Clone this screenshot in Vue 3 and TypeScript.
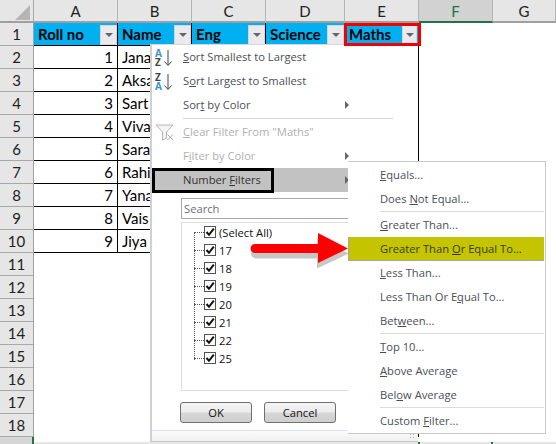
<script setup lang="ts">
const cols = ['A', 'B', 'C', 'D', 'E', 'F', 'G']
const headers = ['Roll no', 'Name', 'Eng', 'Science', 'Maths']
const names = ['Jana', 'Aksa', 'Sart', 'Viva', 'Sara', 'Rahi', 'Yana', 'Vais', 'Jiya']
const rowNums = Array.from({ length: 18 }, (_, i) => i + 1)
const values = ['(Select All)', '17', '18', '19', '20', '21', '22', '25']
</script>

<template>
  <div class="sheet">
    <div class="grid">
      <div class="corner"><span class="corner-tri"></span></div>
      <div v-for="c in cols" :key="c" class="col-head" :class="{ sel: c === 'F' }">{{ c }}</div>

      <template v-for="r in rowNums" :key="r">
        <div class="row-head">{{ r }}</div>
        <template v-if="r === 1">
          <div v-for="h in headers" :key="h" class="th" :class="{ maths: h === 'Maths' }">
            <span>{{ h }}</span>
            <i class="fbtn"><b></b></i>
          </div>
        </template>
        <template v-else-if="r <= 10">
          <div class="td num">{{ r - 1 }}</div>
          <div class="td">{{ names[r - 2] }}</div>
          <div class="td"></div>
          <div class="td"></div>
          <div class="td"></div>
        </template>
        <template v-else>
          <div class="blank"></div>
          <div class="blank"></div>
          <div class="blank"></div>
          <div class="blank"></div>
          <div class="blank edge"></div>
        </template>
        <div class="blank"></div>
        <div class="blank"></div>
      </template>

      <div class="row-head last"></div>
      <div class="foot"></div>
      <div class="foot"></div>
      <div class="foot"></div>
      <div class="foot"></div>
      <div class="foot"></div>
      <div class="foot tick"></div>
      <div class="foot"></div>
    </div>

    <div class="menu">
      <div class="item">
        <svg class="ico" width="18" height="24" viewBox="0 0 18 24">
          <text x="0" y="12" class="az blue">A</text>
          <text x="0" y="21" class="az dark">Z</text>
          <path d="M13 5V20M9.5 16.5L13 20.5L16.5 16.5" fill="none" stroke="#444" stroke-width="1" />
        </svg>
        <span><u>S</u>ort Smallest to Largest</span>
      </div>
      <div class="item">
        <svg class="ico" width="18" height="24" viewBox="0 0 18 24">
          <text x="0" y="12" class="az dark">Z</text>
          <text x="0" y="21" class="az blue">A</text>
          <path d="M13 5V20M9.5 16.5L13 20.5L16.5 16.5" fill="none" stroke="#444" stroke-width="1" />
        </svg>
        <span>S<u>o</u>rt Largest to Smallest</span>
      </div>
      <div class="item sub"><span>Sor<u>t</u> by Color</span><i class="tri"></i></div>
      <div class="sep"></div>
      <div class="item off">
        <svg class="ico" width="20" height="24" viewBox="0 0 20 24">
          <path d="M1 5H18L11.5 12V18L7.5 20V12Z" fill="#f4f4f4" stroke="#b5b5b5" />
          <path d="M12.5 14.5L18 20M18 14.5L12.5 20" stroke="#a8a8a8" fill="none" />
        </svg>
        <span><u>C</u>lear Filter From "Maths"</span>
      </div>
      <div class="item off sub"><span>F<u>i</u>lter by Color</span><i class="tri"></i></div>
      <div class="item numf">
        <span class="numf-box">Number <u>F</u>ilters</span>
        <i class="tri"></i>
      </div>

      <div class="search">Search</div>
      <div class="list">
        <div class="tree">
          <div v-for="v in values" :key="v" class="val">
            <span class="dots"></span>
            <span class="box">
              <svg width="10" height="10" viewBox="0 0 10 10">
                <path d="M1.5 5L4 7.8L8.8 1.6" fill="none" stroke="#111" stroke-width="2" />
              </svg>
            </span>
            <span class="vlabel">{{ v }}</span>
          </div>
        </div>
      </div>
      <div class="btns">
        <button class="btn">OK</button>
        <button class="btn">Cancel</button>
      </div>
      <div class="strip"><span class="grip"></span></div>
    </div>

    <div class="submenu">
      <div class="sitem"><span><u>E</u>quals...</span></div>
      <div class="sitem"><span>Does <u>N</u>ot Equal...</span></div>
      <div class="ssep"></div>
      <div class="sitem"><span><u>G</u>reater Than...</span></div>
      <div class="sitem hot"><span>Greater Than <u>O</u>r Equal To...</span></div>
      <div class="sitem"><span><u>L</u>ess Than...</span></div>
      <div class="sitem"><span>Less Than Or E<u>q</u>ual To...</span></div>
      <div class="sitem"><span>Bet<u>w</u>een...</span></div>
      <div class="ssep"></div>
      <div class="sitem"><span><u>T</u>op 10...</span></div>
      <div class="sitem"><span><u>A</u>bove Average</span></div>
      <div class="sitem"><span>Bel<u>o</u>w Average</span></div>
      <div class="ssep"></div>
      <div class="sitem"><span>Custom <u>F</u>ilter...</span></div>
    </div>

    <svg class="arrow" width="104" height="38" viewBox="0 0 104 38">
      <path d="M7 13H68V3L100 18L68 33V23H7A5 5 0 0 1 7 13Z" fill="#000" opacity=".22" transform="translate(1 2.5)" />
      <path d="M7 11H70V0L100 15.5L70 30V20H7A4.5 4.5 0 0 1 7 11Z" fill="#ff0000" />
    </svg>
  </div>
</template>

<style scoped>
.sheet {
  position: relative;
  width: 556px;
  height: 444px;
  overflow: hidden;
  background: #fff;
  font-family: Lato, "Open Sans", sans-serif;
}
.grid {
  display: grid;
  grid-template-columns: 34px 84px 74px 74px 79px 74px 74px 63px;
  grid-template-rows: repeat(19, 23px) 7px;
}
.corner {
  background: #e6e6e6;
  border-right: 1px solid #a8a8a8;
  border-bottom: 2px solid #a0a0a0;
  position: relative;
}
.corner-tri {
  position: absolute;
  left: 15px;
  top: 5px;
  width: 0;
  height: 0;
  border-style: solid;
  border-width: 0 0 15px 15px;
  border-color: transparent transparent #b5b5b5 transparent;
}
.col-head {
  background: #e6e6e6;
  border-right: 1px solid #b4b4b4;
  border-bottom: 2px solid #a0a0a0;
  display: flex;
  align-items: center;
  justify-content: center;
  font-size: 15px;
  color: #222;
  padding-top: 1px;
  box-sizing: border-box;
}
.col-head.sel {
  background: #d2d2d2;
  border-bottom-color: #217346;
  color: #217346;
}
.row-head {
  background: #e6e6e6;
  border-right: 1px solid #a0a0a0;
  border-bottom: 1px solid #a8a8a8;
  display: flex;
  align-items: center;
  justify-content: center;
  font-size: 15px;
  color: #222;
  box-sizing: border-box;
}
.row-head.last {
  background: #d6d6d6;
  border-bottom: 0;
  border-right: 2px solid #217346;
}
.th {
  background: #00b0f0;
  border-right: 1px solid #000;
  border-bottom: 1px solid #000;
  display: flex;
  align-items: center;
  padding-left: 4px;
  box-sizing: border-box;
  font-size: 15px;
  font-weight: 700;
  color: #000;
  position: relative;
}
.th.maths::after {
  content: "";
  position: absolute;
  left: -1px;
  top: 0;
  right: -3px;
  bottom: -1px;
  border: 3px solid #f00000;
  z-index: 1;
}
.fbtn {
  position: absolute;
  right: 0;
  top: 2px;
  width: 17px;
  height: 20px;
  background: #e9e9ee;
  border: 1px solid #d5d5da;
  box-sizing: border-box;
  display: flex;
  align-items: center;
  justify-content: center;
}
.maths .fbtn {
  width: 15px;
  right: 1px;
}
.fbtn b {
  width: 0;
  height: 0;
  border-style: solid;
  border-width: 4px 4px 0 4px;
  border-color: #666 transparent transparent transparent;
}
.td {
  border-right: 1px solid #000;
  border-bottom: 1px solid #000;
  display: flex;
  align-items: center;
  padding: 0 4px;
  box-sizing: border-box;
  font-size: 15px;
  color: #000;
}
.td.num {
  justify-content: flex-end;
}
.blank {
  background: #fff;
}
.foot {
  position: relative;
  background: #fff;
  border-bottom: 2px solid #e6e6e6;
  box-sizing: border-box;
}
.edge {
  border-right: 1px solid #000;
}
.foot.tick::before,
.foot.tick::after {
  content: "";
  position: absolute;
  bottom: -2px;
  width: 2px;
  height: 2px;
  background: #217346;
}
.foot.tick::before {
  left: -1px;
}
.foot.tick::after {
  right: 0;
}
.menu {
  position: absolute;
  left: 150px;
  top: 44px;
  width: 268px;
  height: 398px;
  box-sizing: border-box;
  background: #fff;
  border-left: 2px solid #d0d0d0;
  border-top: 1px solid #d8d8d8;
  border-bottom: 1px solid #c8c8c8;
  font-family: "Open Sans", sans-serif;
  font-size: 11.2px;
  color: #4a4f57;
  display: flex;
  flex-direction: column;
}
.item {
  height: 24px;
  flex: none;
  display: flex;
  align-items: center;
  padding-left: 31px;
  padding-bottom: 2px;
  position: relative;
  width: 197px;
  box-sizing: border-box;
}
.ico {
  position: absolute;
  left: 3px;
  top: 0;
}
.az {
  font-family: "Open Sans", sans-serif;
  font-size: 10px;
  font-weight: 700;
}
.blue {
  fill: #3d8fd6;
}
.dark {
  fill: #444;
}
.off {
  color: #b0b0b0;
}
.tri {
  position: absolute;
  right: 0;
  top: 8px;
  width: 0;
  height: 0;
  border-style: solid;
  border-width: 4px 0 4px 4px;
  border-color: transparent transparent transparent #666;
}
.sep {
  height: 1px;
  margin: 1px 25px 1px 31px;
  background: #d6d6d6;
  flex: none;
}
.numf {
  background: #c2c2c2;
  padding: 0;
  color: #333;
}
.numf-box {
  width: 122px;
  height: 25px;
  border: 3px solid #000;
  box-sizing: border-box;
  padding: 0 0 2px 28px;
  display: flex;
  align-items: center;
  white-space: pre;
  flex: none;
}
.search {
  margin: 6px 8px 0 29px;
  height: 21px;
  border: 1px solid #a8a8a8;
  box-sizing: border-box;
  display: flex;
  align-items: center;
  padding-left: 2px;
  color: #6b7078;
  flex: none;
}
.list {
  margin: 3px 8px 0 29px;
  height: 169px;
  border: 1px solid #dcdcdc;
  box-sizing: border-box;
  padding: 0 0 0 12px;
  flex: none;
}
.tree {
  position: relative;
}
.tree::before {
  content: "";
  position: absolute;
  left: 0;
  top: 10px;
  height: 127px;
  border-left: 1px dotted #555;
}
.val {
  height: 18px;
  display: flex;
  align-items: center;
  color: #111;
}
.dots {
  width: 10px;
  flex: none;
  border-top: 1px dotted #555;
}
.box {
  width: 12px;
  height: 12px;
  border: 1px solid #555;
  box-sizing: border-box;
  display: flex;
  align-items: center;
  justify-content: center;
  background: #fff;
  flex: none;
}
.vlabel {
  margin-left: 3px;
}
.btns {
  display: flex;
  gap: 12px;
  margin: 11px 0 0 28px;
  flex: none;
}
.btn {
  width: 72px;
  height: 21px;
  padding: 0;
  border: 1px solid #707070;
  border-radius: 3px;
  background: linear-gradient(#f4f4f4 0%, #ececec 48%, #d6d6d6 52%, #cfcfcf 100%);
  font-family: "Open Sans", sans-serif;
  font-size: 11.2px;
  color: #111;
}
.strip {
  margin-top: auto;
  height: 10px;
  border-top: 1px solid #dce6f0;
  background: linear-gradient(#fbfbfb, #f0f0f0);
  position: relative;
  flex: none;
}
.grip {
  position: absolute;
  right: 2px;
  top: 2px;
  width: 7px;
  height: 6px;
  background-image: radial-gradient(#aaa 1px, transparent 1px);
  background-size: 3px 3px;
}
.submenu {
  position: absolute;
  left: 348px;
  top: 161px;
  width: 198px;
  height: 273px;
  box-sizing: border-box;
  background: #fff;
  border: 1px solid #c8c8c8;
  border-left: 0;
  padding-top: 1px;
  font-family: "Open Sans", sans-serif;
  font-size: 11.2px;
  color: #4a4f57;
  z-index: 2;
}
.sitem {
  height: 24px;
  display: flex;
  align-items: center;
  padding-left: 32px;
  box-sizing: border-box;
  padding-bottom: 1px;
}
.sitem.hot {
  background: #c4c400;
  color: #3a3a10;
  border: 1px solid #a8a8a0;
  border-width: 0 0 1px 1px;
  padding-left: 31px;
  margin-right: 1px;
}
.ssep {
  height: 1px;
  margin: 0 1px 1px 32px;
  background: #dcdcdc;
}
.arrow {
  position: absolute;
  left: 248px;
  top: 233px;
  z-index: 3;
}
</style>
